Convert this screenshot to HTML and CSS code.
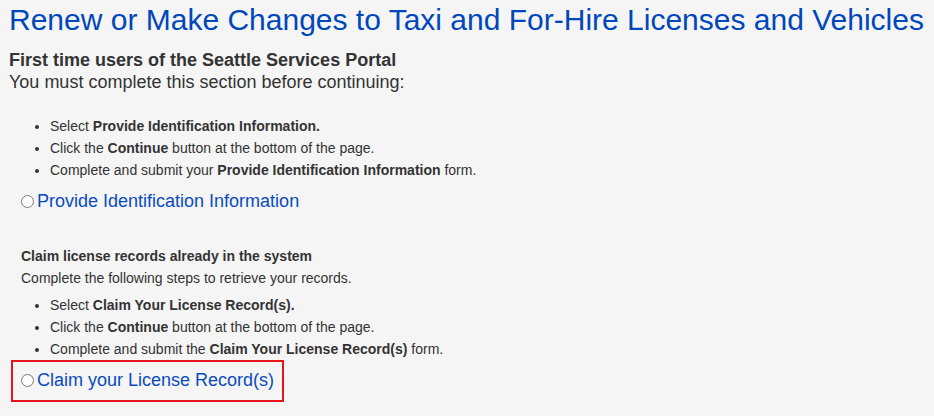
FILE: index.html
```html
<!DOCTYPE html>
<html lang="en">
<head>
    <meta charset="UTF-8">
    <meta name="viewport" content="width=device-width, initial-scale=1.0">
    <title>Renew or Make Changes to Taxi and For-Hire Licenses and Vehicles</title>
    <link rel="stylesheet" href="styles.css">
</head>
<body>
    <div class="page">
        <h1 class="page-title">Renew or Make Changes to Taxi and For-Hire Licenses and Vehicles</h1>

        <div class="intro">
            <div class="intro-head">First time users of the Seattle Services Portal</div>
            <div class="intro-text">You must complete this section before continuing:</div>
        </div>

        <div class="section">
            <ul class="steps">
                <li>Select <b>Provide Identification Information.</b></li>
                <li>Click the <b>Continue</b> button at the bottom of the page.</li>
                <li>Complete and submit your <b>Provide Identification Information</b> form.</li>
            </ul>
            <label class="choice">
                <input type="radio" name="action" value="ident">
                <span>Provide Identification Information</span>
            </label>
        </div>

        <div class="section claim">
            <div class="section-head">Claim license records already in the system</div>
            <div class="section-text">Complete the following steps to retrieve your records.</div>
            <ul class="steps">
                <li>Select <b>Claim Your License Record(s).</b></li>
                <li>Click the <b>Continue</b> button at the bottom of the page.</li>
                <li>Complete and submit the <b>Claim Your License Record(s)</b> form.</li>
            </ul>
            <label class="choice highlighted">
                <input type="radio" name="action" value="claim">
                <span>Claim your License Record(s)</span>
            </label>
        </div>
    </div>
</body>
</html>
```

FILE: styles.css
```css
body {
    margin: 0;
    background-color: #f5f5f5;
    font-family: "Liberation Sans", Arial, sans-serif;
    color: #333;
}
.page {
    padding: 0 9px;
}
.page-title {
    margin: 0;
    padding-top: 2px;
    font-size: 30px;
    font-weight: normal;
    line-height: 36px;
    color: #0047bb;
}
.intro {
    margin-top: 11px;
    font-size: 18px;
    line-height: 22px;
}
.intro-head {
    font-weight: bold;
}
.section {
    padding-left: 12px;
}
.steps {
    margin: 22px 0 0;
    padding-left: 29px;
    font-size: 14px;
    line-height: 22px;
}
.choice {
    display: inline-flex;
    align-items: center;
    gap: 3px;
    margin-top: 10px;
    font-size: 18px;
    color: #0a4bc0;
    cursor: pointer;
}
.choice input {
    margin: 0;
    width: 13px;
    height: 13px;
}
.claim {
    margin-top: 33px;
}
.section-head {
    font-size: 14px;
    font-weight: bold;
    line-height: 22px;
}
.section-text {
    font-size: 14px;
    line-height: 22px;
}
.claim .steps {
    margin-top: 5px;
}
.highlighted {
    margin-top: 0;
    margin-left: -10px;
    padding: 8px 8px 9px;
    border: 2px solid #e8141b;
}
```
